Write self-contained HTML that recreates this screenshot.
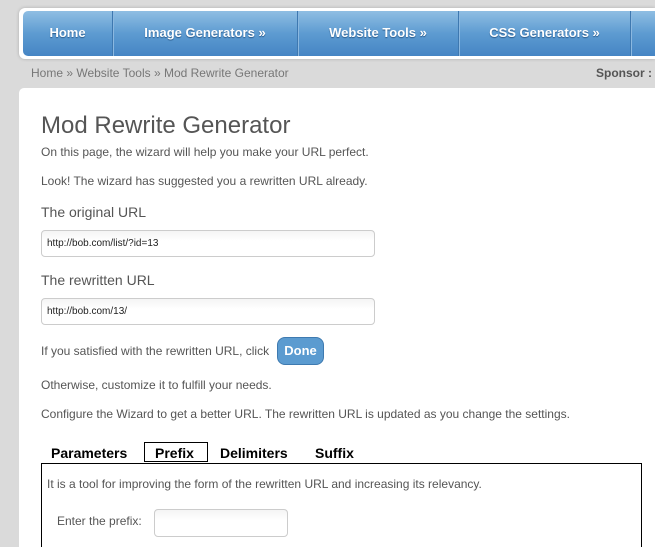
<!DOCTYPE html>
<html style="overflow:hidden;height:547px"><head><style>
body{margin:0;background:#dadada;font-family:"Liberation Sans",Arial,sans-serif;width:655px;height:547px;overflow:hidden;position:relative}
.navw{position:absolute;left:19px;top:8px;width:636px;height:51px;background:#fff;border-radius:6px 0 0 6px;box-shadow:0 0 3px #aaa}
.nav{position:absolute;left:23px;top:11px;width:632px;height:45px;border-radius:5px 0 0 5px;background:linear-gradient(#8fbee3,#5d9bd1 50%,#4585c4);overflow:hidden}
.nav div{position:absolute;top:0;height:45px;line-height:44px;color:#fff;font-weight:bold;font-size:13px;text-align:center;border-right:1px solid #3e78b0;box-shadow:1px 0 0 #8bb8e0;text-shadow:0 1px 1px #2a5a8a;box-sizing:border-box;white-space:nowrap}
.bc{position:absolute;left:31px;top:66px;font-size:12px;color:#777}
.sp{position:absolute;left:596px;top:66px;font-size:12px;color:#555;font-weight:bold;white-space:nowrap}
.panel{position:absolute;left:19px;top:88px;width:636px;height:459px;background:#fff;border-radius:5px 0 0 0}
.a{position:absolute;left:41px;color:#555;font-size:12px;white-space:nowrap}
h1{position:absolute;left:41px;top:112px;margin:0;font-weight:normal;font-size:24px;color:#555}
.lbl{position:absolute;left:41px;font-size:14px;color:#555}
.in{position:absolute;left:41px;width:334px;height:27px;border:1px solid #ccc;border-radius:4px;font-size:10px;line-height:25px;padding-left:5px;box-sizing:border-box;color:#222;background:linear-gradient(#f4f4f4,#fff 40%)}
.done{position:absolute;left:277px;top:337px;width:47px;height:28px;background:#5b9bd0;border:1px solid #3e7ab0;border-radius:8px;box-sizing:border-box;color:#fff;font-weight:bold;font-size:13px;text-align:center;line-height:26px}
.tab{position:absolute;top:445px;font-weight:bold;font-size:14px;color:#000}
</style></head><body>
<div class="navw"></div>
<div class="nav">
<div style="left:0;width:90px">Home</div>
<div style="left:90px;width:185px">Image Generators »</div>
<div style="left:275px;width:161px">Website Tools »</div>
<div style="left:436px;width:172px">CSS Generators »</div>
</div>
<div class="bc">Home » Website Tools » Mod Rewrite Generator</div>
<div class="sp">Sponsor : N</div>
<div class="panel"></div>
<h1>Mod Rewrite Generator</h1>
<div class="a" style="top:145px">On this page, the wizard will help you make your URL perfect.</div>
<div class="a" style="top:174px">Look! The wizard has suggested you a rewritten URL already.</div>
<div class="lbl" style="top:204px">The original URL</div>
<div class="in" style="top:230px">http://bob.com/list/?id=13</div>
<div class="lbl" style="top:272px">The rewritten URL</div>
<div class="in" style="top:298px">http://bob.com/13/</div>
<div class="a" style="top:344px">If you satisfied with the rewritten URL, click</div>
<div class="done">Done</div>
<div class="a" style="top:378px">Otherwise, customize it to fulfill your needs.</div>
<div class="a" style="top:407px">Configure the Wizard to get a better URL. The rewritten URL is updated as you change the settings.</div>
<div class="tab" style="left:51px">Parameters</div>
<div style="position:absolute;left:144px;top:442px;width:64px;height:20px;border:1px solid #000;box-sizing:border-box"></div>
<div class="tab" style="left:155px">Prefix</div>
<div class="tab" style="left:220px">Delimiters</div>
<div class="tab" style="left:315px">Suffix</div>
<div style="position:absolute;left:41px;top:463px;width:601px;height:84px;border:1px solid #000;border-bottom:none;box-sizing:border-box"></div>
<div class="a" style="left:47px;top:477px">It is a tool for improving the form of the rewritten URL and increasing its relevancy.</div>
<div class="a" style="left:57px;top:514px">Enter the prefix:</div>
<div style="position:absolute;left:154px;top:509px;width:134px;height:28px;border:1px solid #ccc;border-radius:4px;box-sizing:border-box;background:linear-gradient(#f4f4f4,#fff 40%)"></div>
</body></html>
